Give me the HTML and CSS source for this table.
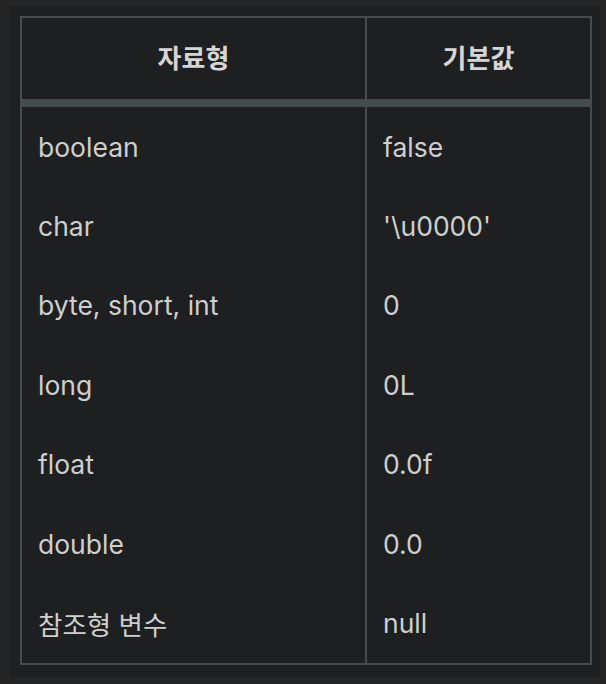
FILE: index.html
```html
<!DOCTYPE html>
<html lang="ko">
<head>
<meta charset="utf-8">
<link rel="stylesheet" href="styles.css">
</head>
<body>
<div class="wrap">
  <table class="types">
    <colgroup><col class="c1"><col class="c2"></colgroup>
    <thead>
      <tr><th>자료형</th><th>기본값</th></tr>
    </thead>
    <tbody>
      <tr><td>boolean</td><td>false</td></tr>
      <tr><td>char</td><td>'\u0000'</td></tr>
      <tr><td>byte, short, int</td><td>0</td></tr>
      <tr><td>long</td><td>0L</td></tr>
      <tr><td>float</td><td>0.0f</td></tr>
      <tr><td>double</td><td>0.0</td></tr>
      <tr><td>참조형 변수</td><td>null</td></tr>
    </tbody>
  </table>
</div>
</body>
</html>
```
FILE: styles.css
```css
html, body {
  margin: 0;
  padding: 0;
  background: #252525;
}
body {
  padding: 6px 6px 8px 10px;
  font-family: Inter, "Noto Sans CJK KR", sans-serif;
  color: #cfcfcf;
}
.wrap {
  background: #1e1f21;
  width: 570px;
  padding: 10px 10px 12px 10px;
}
.types {
  border-collapse: collapse;
  width: 570px;
  font-size: 26.5px;
  table-layout: fixed;
  border: 2px solid #464b4e;
}
.types col.c1 { width: 345px; }
.types col.c2 { width: 225px; }
.types th, .types td {
  border-left: 2px solid #464b4e;
  border-right: 2px solid #464b4e;
  padding: 0 16px;
}
.types th {
  height: 77px;
  padding-bottom: 4px;
  font-weight: 700;
  font-size: 26px;
  text-align: center;
  border-bottom: 8px solid #464b4e;
  color: #d6d6d6;
}
.types td {
  height: 79.4px;
  text-align: left;
}
```
